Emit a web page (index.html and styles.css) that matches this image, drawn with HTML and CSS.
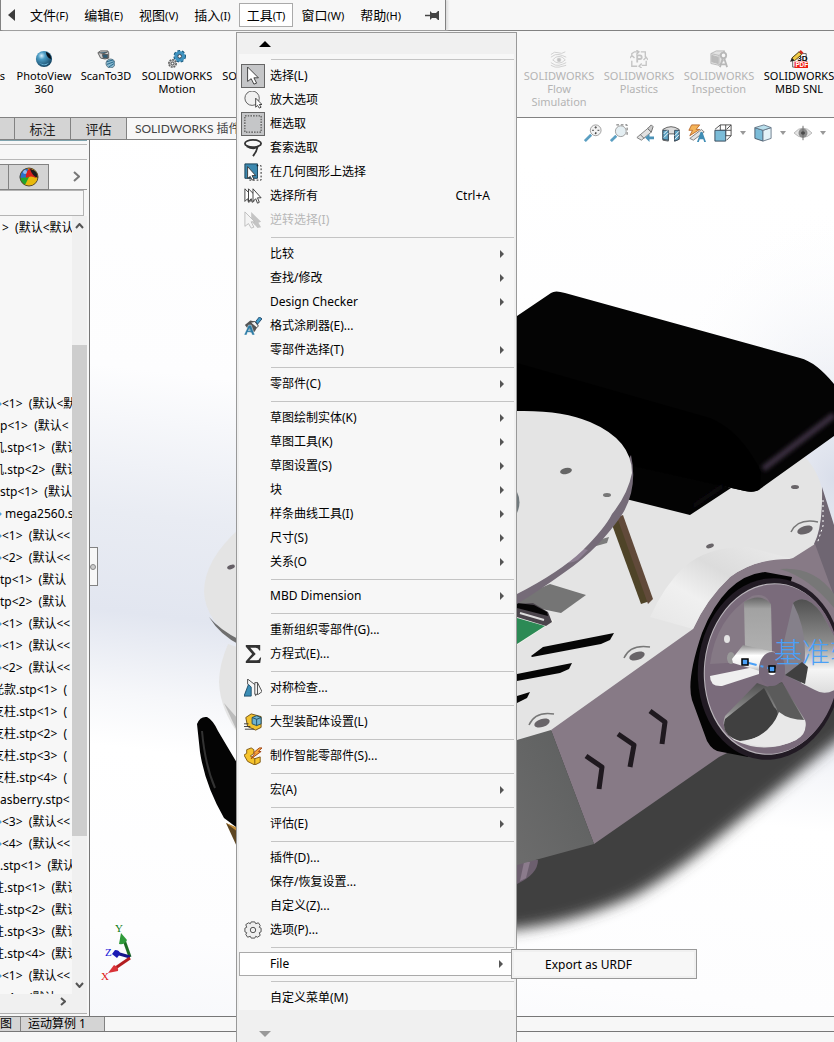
FILE: index.html
```
<!DOCTYPE html>
<html lang="zh-CN">
<head>
    <meta charset="UTF-8">
    <meta name="viewport" content="width=device-width, initial-scale=1.0">
    <title>SOLIDWORKS</title>
    <link rel="stylesheet" href="styles.css">
</head>
<body>
<div class="app">

    <header class="menubar">
        <nav class="menus">
            <svg class="collapse" width="7" height="12" viewBox="0 0 7 12"><path d="M7 0v12L0 6z" fill="#3c3c3c"/></svg>
            <button>文件<small>(F)</small></button>
            <button>编辑<small>(E)</small></button>
            <button>视图<small>(V)</small></button>
            <button>插入<small>(I)</small></button>
            <button class="open">工具<small>(T)</small></button>
            <button>窗口<small>(W)</small></button>
            <button>帮助<small>(H)</small></button>
            <svg class="pin" width="15" height="11" viewBox="0 0 15 11"><path d="M0 5.500h6" stroke="#444" stroke-width="1.500"/><path d="M5 1l2 2h4l2-2h1v9h-1l-2-2H7l-2 2z" fill="#444"/></svg>
        </nav>
    </header>

    <section class="ribbon">
        <div class="ribbon-group">
            <button class="tool edge">s</button>
            <button class="tool narrow">
                <svg viewBox="0 0 20 20"><defs><radialGradient id="ball" cx=".35" cy=".3" r=".75"><stop offset="0" stop-color="#d5eefa"/><stop offset=".3" stop-color="#4b9cc4"/><stop offset="1" stop-color="#12405e"/></radialGradient></defs><circle cx="10" cy="10" r="9" fill="url(#ball)"/><path d="M12 2q6 2 6 8-5-1-6-8z" fill="#081018"/><path d="M4 14q6 4 12 0-5 6-12 0z" fill="#6db7da"/></svg>
                <span>PhotoView 360</span>
            </button>
            <button class="tool narrow">
                <svg viewBox="0 0 20 20"><path d="M1 3l3-2h8l1 2v6l-4 1-5-1z" fill="#ccc" stroke="#555"/><path d="M2 3l6 1 4-2M6 5h6v4H7z" fill="#2c5d78" stroke="#555"/><circle cx="15" cy="15" r="5" fill="#8bb9cf" stroke="#59727f"/><path d="M11 13l7-2M11 16l8-3M13 19l6-4" stroke="#1d6186"/></svg>
                <span>ScanTo3D</span>
            </button>
            <button class="tool">
                <svg viewBox="0 0 20 20"><circle cx="13" cy="7" r="6" fill="none" stroke="#17577b" stroke-width="2" stroke-dasharray="3 2"/><circle cx="13" cy="7" r="4" fill="none" stroke="#3f92bf" stroke-width="4"/><circle cx="13" cy="7" r="2" fill="#fff" stroke="#234"/><circle cx="5" cy="15" r="4" fill="#bbb" stroke="#666" stroke-width="2" stroke-dasharray="2 1"/><circle cx="5" cy="15" r="3" fill="#bbb"/><circle cx="5" cy="15" r="1.500" fill="#fff" stroke="#444"/></svg>
                <span>SOLIDWORKS Motion</span>
            </button>
            <button class="tool clipped">SO</button>
        </div>
        <div class="ribbon-group right">
            <button class="tool" disabled>
                <svg viewBox="0 0 20 20" fill="none" stroke="#cdcdcd"><path d="M1 5q4-4 8-2t8-1M1 8q5-4 9-3t8 3M1 14q5 4 9 3t8-3M1 17q5 3 9 2t8-2M3 11q7-8 14 0-7 7-14 0"/><circle cx="10" cy="11" r="2" fill="#c3c3c3"/></svg>
                <span>SOLIDWORKS Flow Simulation</span>
            </button>
            <button class="tool" disabled>
                <svg viewBox="0 0 20 20" fill="none" stroke="#c4c4c4"><path d="M2 7V4l3-2h4M12 2h5v6M18 12v5h-5M8 18H2v-6M0 9l2-3 3 3M7 0l3 2-3 3M20 11l-2-3-3 3M13 15l-3 3 3 2" stroke-width="1.500"/><path d="M8 14V6h3q2 0 2 2t-2 2H8" stroke-width="2"/></svg>
                <span>SOLIDWORKS Plastics</span>
            </button>
            <button class="tool" disabled>
                <svg viewBox="0 0 20 20" fill="none" stroke="#b8b8b8"><path d="M1 4l6-3h9v10l-6 6-9-2z" fill="#e2e2e2"/><path d="M1 4l9 2 6-5M10 6v11"/><path d="M2 6l7 2v7l-7-2z" fill="#bbb"/><circle cx="15" cy="6" r="3" fill="#f7f7f7" stroke-width="2"/><path d="M14 10l-3 9M16 10l3 9M12 16h6" stroke-width="2"/></svg>
                <span>SOLIDWORKS Inspection</span>
            </button>
            <button class="tool">
                <svg viewBox="0 0 20 20"><path d="M3 8v11h15V4H9z" fill="#fff" stroke="#555"/><text x="8" y="12" class="ico-3d">3D</text><path d="M2 9l8-7 3 3-8 7z" fill="#f0c944" stroke="#443a14"/><path d="M10 2l2-2 3 3-2 2z" fill="#d42b1e"/><path d="M0 13l2-4 3 3z" fill="#222"/><path d="M5 13h15v7H5z" fill="#f01d12"/><text x="6" y="19" class="ico-pdf">PDF</text></svg>
                <span>SOLIDWORKS MBD SNL</span>
            </button>
        </div>
    </section>

    <main class="work">
        <div class="tabs">
            <button class="stub" aria-label="草图"></button>
            <button>标注</button>
            <button>评估</button>
            <button class="active">SOLIDWORKS 插件</button>
        </div>

        <aside class="panel">
            <div class="panel-grip"></div>
            <div class="panel-gap"></div>
            <div class="panel-tabs">
                <button class="stub" aria-label="配置"></button>
                <button aria-label="外观">
                    <svg width="20" height="20" viewBox="0 0 20 20"><circle cx="10" cy="10" r="9" fill="#e8b90c"/><path d="M10 10L1 12A9 9 0 0 1 8 1.200q4 3 2 8.800z" fill="#2b6fc8"/><path d="M10 10L1 11q1 5 5 7z" fill="#22a52c"/><path d="M7 11Q6 5 11 1q6 4 6 10-5-3-10 0z" fill="#d8211c"/><path d="M11 2q8 1 8 9-6-2-8-9z" fill="#1c1c1c"/><circle cx="6" cy="5" r="2" fill="#bfe0ff" opacity=".7"/><circle cx="10" cy="10" r="9" fill="none" stroke="#5b4a2a"/></svg>
                </button>
                <svg class="chev" width="7" height="11" viewBox="0 0 7 11"><path d="M1 1l5 4.500L1 10" fill="none" stroke="#777" stroke-width="2"/></svg>
            </div>
            <input class="filter" type="text" aria-label="筛选">
            <div class="tree-wrap">
                <ul class="tree">
                    <li class="root">&gt;&nbsp; (默认&lt;默认</li>
                    <li class="part">&lt;1&gt;&nbsp; (默认&lt;默认</li>
                    <li>p&lt;1&gt;&nbsp; (默认&lt;</li>
                    <li class="cut">机.stp&lt;1&gt;&nbsp; (默认</li>
                    <li class="cut">机.stp&lt;2&gt;&nbsp; (默认</li>
                    <li>stp&lt;1&gt;&nbsp; (默认</li>
                    <li class="part mega">mega2560.s</li>
                    <li class="part">&lt;1&gt;&nbsp; (默认&lt;&lt;</li>
                    <li class="part">&lt;2&gt;&nbsp; (默认&lt;&lt;</li>
                    <li>tp&lt;1&gt;&nbsp; (默认</li>
                    <li>tp&lt;2&gt;&nbsp; (默认</li>
                    <li class="part">&lt;1&gt;&nbsp; (默认&lt;&lt;</li>
                    <li class="part">&lt;1&gt;&nbsp; (默认&lt;&lt;</li>
                    <li class="part">&lt;2&gt;&nbsp; (默认&lt;&lt;</li>
                    <li class="cut">光款.stp&lt;1&gt;&nbsp; (</li>
                    <li class="cut">支柱.stp&lt;1&gt;&nbsp; (</li>
                    <li class="cut">支柱.stp&lt;2&gt;&nbsp; (</li>
                    <li class="cut">支柱.stp&lt;3&gt;&nbsp; (</li>
                    <li class="cut">支柱.stp&lt;4&gt;&nbsp; (</li>
                    <li>asberry.stp&lt;</li>
                    <li class="part">&lt;3&gt;&nbsp; (默认&lt;&lt;</li>
                    <li class="part">&lt;4&gt;&nbsp; (默认&lt;&lt;</li>
                    <li>.stp&lt;1&gt;&nbsp; (默认</li>
                    <li class="cut">柱.stp&lt;1&gt;&nbsp; (默认</li>
                    <li class="cut">柱.stp&lt;2&gt;&nbsp; (默认</li>
                    <li class="cut">柱.stp&lt;3&gt;&nbsp; (默认</li>
                    <li class="cut">柱.stp&lt;4&gt;&nbsp; (默认</li>
                    <li class="part">&lt;1&gt;&nbsp; (默认&lt;&lt;</li>
                    <li class="part">&lt;1&gt;&nbsp; (默认&lt;&lt;</li>
                </ul>
                <div class="vbar">
                    <svg width="9" height="6" viewBox="0 0 9 6"><path d="M1 5l3.500-4L8 5" fill="none" stroke="#555" stroke-width="2"/></svg>
                    <div class="thumb"></div>
                    <svg width="9" height="6" viewBox="0 0 9 6"><path d="M1 1l3.500 4L8 1" fill="none" stroke="#555" stroke-width="2"/></svg>
                </div>
            </div>
            <div class="hbar"><svg width="6" height="9" viewBox="0 0 6 9"><path d="M1 1l4 3.500L1 8" fill="none" stroke="#555" stroke-width="2"/></svg></div>
            <div class="panel-foot"></div>
        </aside>

        <div class="viewport">
            <svg class="model" viewBox="90 118 744 898" preserveAspectRatio="xMinYMin slice">
                <defs>
                    <filter id="soft" x="-20%" y="-20%" width="140%" height="140%"><feGaussianBlur stdDeviation="7"/></filter>
                    <filter id="sheen" x="-20%" y="-20%" width="140%" height="140%"><feGaussianBlur stdDeviation="2"/></filter>
                    <linearGradient id="sky" x1=".1" y1="0" x2="0" y2="1"><stop offset="0" stop-color="#fff"/><stop offset=".28" stop-color="#fdfdfe"/><stop offset=".44" stop-color="#e9ecf3"/><stop offset=".55" stop-color="#e2e6f0"/><stop offset=".64" stop-color="#f6f7fa"/><stop offset=".7" stop-color="#fff"/><stop offset=".9" stop-color="#fdfdfe"/><stop offset="1" stop-color="#f7f8fb"/></linearGradient>
                    <radialGradient id="haze" cx="1" cy=".65" r=".6"><stop offset="0" stop-color="#d9deea"/><stop offset="1" stop-color="#fff" stop-opacity="0"/></radialGradient>
                    <linearGradient id="arch" x1="0" y1="1" x2="1" y2="0"><stop offset="0" stop-color="#e6e6e6"/><stop offset=".35" stop-color="#f0f0f0"/><stop offset=".6" stop-color="#dcdcdc"/><stop offset="1" stop-color="#ebebeb"/></linearGradient>
                    <linearGradient id="front" x1="0" y1="1" x2="1" y2="0"><stop offset="0" stop-color="#6c6c6c"/><stop offset="1" stop-color="#5c5e5e"/></linearGradient>
                    <linearGradient id="shaft" x1="0" y1="0" x2="0" y2="1"><stop offset="0" stop-color="#8d8d8d"/><stop offset=".35" stop-color="#fff"/><stop offset=".7" stop-color="#eee"/><stop offset="1" stop-color="#8a8a8a"/></linearGradient>
                    <linearGradient id="bore" x1="0" y1="0" x2="0" y2="1"><stop offset="0" stop-color="#505050"/><stop offset=".45" stop-color="#8b8b8b"/><stop offset=".75" stop-color="#f5f5f5"/><stop offset="1" stop-color="#ddd"/></linearGradient>
                    <linearGradient id="strip" x1="0" y1="0" x2="0" y2="1"><stop offset="0" stop-color="#666"/><stop offset=".2" stop-color="#a2a2a2"/><stop offset="1" stop-color="#b1b1b1"/></linearGradient>
                    <clipPath id="below"><path d="M517 500H834V1016H517z"/></clipPath>
                </defs>
                <rect x="90" y="118" width="744" height="898" fill="url(#sky)"/>
                <rect x="517" y="180" width="317" height="460" fill="url(#haze)"/>

                <!-- left side of the robot -->
                <path d="M240 528Q204 560 204 592 205 620 240 646z" fill="#e4e4e4"/>
                <path d="M209 617Q220 635 240 645v-5Q220 630 209 617z" fill="#6f6f6f"/>
                <path d="M228 644Q219 665 219 682 220 710 240 736V648z" fill="#e4e4e4"/>
                <path d="M224 703l14 30v-14z" fill="#bbb"/>
                <ellipse cx="231" cy="567" rx="4" ry="2" fill="#655f66" transform="rotate(-20 231 567)"/>
                <path d="M226 823l12 6v20z" fill="#5d4521"/><path d="M226 823l12 5v4z" fill="#c18b36"/>
                <path d="M197 724Q200 716 207 717 213 720 218 731L240 768v62L224 818Q205 785 200 752z" fill="#040404"/>
                <path d="M202 731Q205 765 215 788" stroke="#333" stroke-width="2" fill="none"/>

                <!-- ground shadow -->
                <g clip-path="url(#below)"><path d="M480 932Q560 930 636 895 680 870 720 836L860 722V560H480z" fill="#404040" filter="url(#soft)"/></g>

                <!-- chassis -->
                <path d="M517 860h21q0 14-21 24z" fill="#6c5f6e"/><path d="M524 862h6l-4 16-6 3z" fill="#8b7b8c"/>
                <path d="M517 400L805 457Q821 474 824 500 826 525 816 545L793 562 720 640 551 731 517 741z" fill="#e4e4e4"/>
                <path d="M822 487l12 38v75l-20-56q9-17 8-57z" fill="#6f6672"/>
                <path d="M551 730L693 629Q706 600 730 577 755 558 793 558L815 544 834 596V700L719 757 594 844z" fill="#877a86"/>
                <path d="M517 740l34-10 43 114-77 21z" fill="url(#front)"/>
                <path d="M650 617Q664 586 684 567 708 546 748 547L793 559Q755 558 730 577 707 598 693 629z" fill="url(#arch)"/>
                <path d="M780 569q34-3 54 25v14q-24-30-54-39z" fill="#777"/>
                <path d="M823 500v26l-6 18" stroke="#fff" stroke-dasharray="2 3" fill="none"/>

                <g fill="#060606">
                    <path d="M531 656l12-9 71-14-4 7-9 4-69 13z"/>
                    <path d="M517 674l55-11-3 6-9 4-43 8z"/>
                    <path d="M517 696l13-4-3 6-10 5z"/>
                </g>
                <g fill="none" stroke="#1f191f" stroke-width="5" stroke-linejoin="round">
                    <path d="M650 711l15 11-3 22"/><path d="M618 734l16 11-4 22"/><path d="M586 756l16 11-3 22"/>
                </g>
                <g fill="#686468">
                    <ellipse cx="637" cy="656" rx="8" ry="4" transform="rotate(-18 637 656)"/>
                    <ellipse cx="542" cy="723" rx="8" ry="4" transform="rotate(-18 542 723)"/>
                    <ellipse cx="805" cy="530" rx="8" ry="4" transform="rotate(-18 805 530)"/>
                    <ellipse cx="710" cy="546" rx="4" ry="2" transform="rotate(-18 710 546)"/>
                    <ellipse cx="795" cy="487" rx="4" ry="2"/>
                </g>
                <g fill="none" stroke="#777" stroke-width="1.500">
                    <path d="M624 658q6-14 26-11M529 725q6-14 25-11M791 532q7-14 27-10"/>
                </g>

                <!-- electronics under the disc -->
                <path d="M517 598l33-14 36 11-25 18-44-9z" fill="#757575"/>
                <path d="M517 621l32-3 5 3-37 24z" fill="#f4f4ee"/>
                <path d="M517 618l28 8-28 18z" fill="#2c8a55"/>
                <path d="M517 604l16-1 15 9 4 10-6 4-29-9z" fill="#4b454c"/>
                <path d="M517 603l17 2 13 7 1 4-31-8z" fill="#060606"/>
                <path d="M520 613l24 7" stroke="#ddd" stroke-width="2"/>

                <!-- battery box -->
                <path d="M517 400H640V460l91 28-41 27-60-15-113-20z" fill="#030303"/>
                <path d="M517 316L551 293Q555 290 565 293L800 358Q816 362 834 384V436L760 489Q755 493 745 491L517 440z" fill="#040404"/>
                <path d="M517 363l193 55q30 12 51 53l-1 18q-5 4-15 2L517 440z" fill="#000"/>
                <path d="M763 469l71-54" stroke="#3a2f40" stroke-width="6" filter="url(#sheen)"/>
                <path d="M692 507l32-22" stroke="#1c171e" stroke-width="2" filter="url(#sheen)"/>

                <!-- standoff and top disc -->
                <path d="M595 541l14-4-2 6-18 5z" fill="#7c7c7c"/>
                <path d="M611 522l7-4 32 83-9 3z" fill="#4f4428"/>
                <path d="M617 517l6-2 30 84-5 5z" fill="#614a3a"/>
                <path d="M631 455Q638 487 623 513 600 548 565 572 540 590 517 604V590L600 510z" fill="#756b78"/>
                <path d="M588 550l-10 10q-8 4-12 2l14-14z" fill="#8d7f92"/>
                <path d="M517 411Q562 410 590 422 632 440 632 473 628 494 612 514 605 528 583 550 560 572 517 594z" fill="#e4e4e4"/>
                <ellipse cx="566" cy="471" rx="6" ry="3" fill="#666" transform="rotate(-12 566 471)"/>
                <ellipse cx="607" cy="495" rx="4" ry="2" fill="#777"/>
                <path d="M517 492q5 10 0 21z" fill="#717a7e"/>

                <!-- wheel -->
                <path d="M792 577L765 572Q725 576 702 633 686 680 692 700L707 741Q713 752 722 752L748 757z" fill="#040404"/>
                <ellipse cx="770" cy="669" rx="72" ry="91" fill="#221b24" transform="rotate(6 770 669)"/>
                <ellipse cx="771" cy="669" rx="67" ry="86" fill="#b9b4ba" transform="rotate(6 771 669)"/>
                <ellipse cx="772" cy="669" rx="67" ry="85" fill="#7a6b7b" transform="rotate(6 772 669)"/>
                <path d="M710 664Q716 618 752 596 768 592 771 606L772 656 744 662z" fill="#857985"/>
                <path d="M744 602q16-10 27 2l1 50-27-6z" fill="url(#strip)"/>
                <path d="M793 603Q806 592 822 614L836 640V689Q825 696 815 690L785 675 782 650z" fill="#85808a"/>
                <path d="M793 603Q806 592 822 614L836 640V689Q825 696 815 690L801 683Q812 640 793 603z" fill="url(#bore)"/>
                <path d="M785 675l17-13 6 5-3 17z" fill="#404040"/>
                <path d="M757 683L725 716Q720 730 734 740 765 755 796 740 808 730 805 720L782 682 768 687z" fill="url(#bore)"/>
                <path d="M764 688l-39 31q-5 16 15 22 26-3 36-18 5-10-2-16z" fill="#404040"/>
                <path d="M766 687l16-4 22 37q-8 12-26 0 0-10-3-15z" fill="#5b5b5b"/>
                <path d="M779 712q10 8 26 8 3 14-9 20-24 12-54 2 28-6 37-30z" fill="#e8e8e8"/>
                <path d="M710 676l49-10v8l-37 12q-12 1-12-10z" fill="#efefef"/>
                <ellipse cx="727" cy="639" rx="3" ry="4" fill="#e4e4e4"/>
                <ellipse cx="731" cy="658" rx="4" ry="6" fill="#999"/>
                <path d="M732 659l11-14 32 7-2 23-40-12z" fill="url(#shaft)"/>
                <ellipse cx="772" cy="669" rx="13" ry="17" fill="#77697a"/>
                <ellipse cx="772" cy="671" rx="4" ry="4" fill="#fff"/>

                <path d="M745 662l27 7" stroke="#4aa0f7" stroke-width="2" stroke-dasharray="12 4 3 4"/>
                <path d="M742 659h6v6h-6zM769 666h6v6h-6z" fill="#4aa0f7" stroke="#000" stroke-width="1.500"/>
                <text class="axis-name" x="774" y="663">基准轴</text>

                <!-- orientation triad -->
                <path d="M130 957l-6-17" stroke="#1c6b22" stroke-width="3"/><path d="M121 933l6 7q-2 5-8 4z" fill="#2f9a3a"/>
                <path d="M130 957l-14-4" stroke="#16168a" stroke-width="3"/><path d="M112 954l3-4q5 0 5 4l-3 4z" fill="#1a1ab4"/>
                <path d="M130 958l-16 11" stroke="#b31d20" stroke-width="3"/><path d="M108 973l6-8q5 2 4 6z" fill="#d93338"/>
                <g class="triad"><text x="115" y="932" fill="#0a7a14">Y</text><text x="105" y="956" fill="#1414d8">Z</text><text x="101" y="980" fill="#e01414">X</text></g>
            </svg>

            <button class="splitter" aria-label="折叠面板"><i></i></button>

            <div class="hud">
                <button aria-label="整屏显示全图"><svg viewBox="0 0 20 20"><path d="M1 19l7-7" stroke="#5b9fc2" stroke-width="3"/><circle cx="13" cy="7" r="6" fill="#f2f2f2" stroke="#999"/><path d="M13 3v2M13 9v2M9 7h2M15 7h2M12 4l1-1 1 1M12 10l1 1 1-1" stroke="#333" fill="none"/></svg></button>
                <button aria-label="局部放大"><svg viewBox="0 0 20 20"><path d="M7 1h12v13" stroke="#555" stroke-dasharray="3 2" fill="none"/><path d="M1 19l6-6" stroke="#5b9fc2" stroke-width="3"/><circle cx="12" cy="8" r="6" fill="#e4eef2" stroke="#999"/></svg></button>
                <button aria-label="上一视图"><svg viewBox="0 0 20 20"><path d="M1 15l12-10 4 4-11 9z" fill="#e2e2e2" stroke="#777"/><path d="M13 5l4-4 2 2-2 6zM5 12l4 4" fill="#ccc" stroke="#666"/><path d="M10 15l5-4v3h5v3h-5v3z" fill="#4d93b8"/></svg></button>
                <button aria-label="剖面视图"><svg viewBox="0 0 20 20"><path d="M1 6q9-6 18 0v11l-5 2v-8H7v8l-6-1z" fill="#ddd" stroke="#555"/><path d="M1 7h6v11l-6-1zM14 7h5v10l-5 2z" fill="#5fa5c6" stroke="#345"/><path d="M2 11l4-4M2 15l5-5M14 13l5-5M14 17l5-5" stroke="#fff"/></svg></button>
                <button aria-label="动态注解"><svg viewBox="0 0 20 20"><path d="M4 1h9L9 6h4L2 13l3-6H1z" fill="#f5b458" stroke="#b8692b"/><path d="M2 16L15 6l3 3L6 18z" fill="#e2e2e2" stroke="#777"/><path d="M10 20l4-11h2l4 11h-2l-1-3h-4l-1 3z" fill="#3f8db5"/></svg></button>
                <button aria-label="视图定向"><svg viewBox="0 0 20 20"><path d="M7 1h12v12H7zM1 6l6-5M14 6l5-5M14 18l5-5M13 1v12M7 7h12" fill="#fff" stroke="#444"/><path d="M1 7h12v12H1z" fill="#7bbcd8" stroke="#345"/></svg></button>
                <i class="caret"></i>
                <button aria-label="显示样式"><svg viewBox="0 0 20 20"><path d="M1 4l9 3v12l-9-3z" fill="#7bbcd8" stroke="#456"/><path d="M10 7l9-3v12l-9 3z" fill="#e4f2f7" stroke="#678"/><path d="M1 4l10-3 8 3-9 3z" fill="#b9dfec" stroke="#678"/></svg></button>
                <i class="caret"></i>
                <button aria-label="隐藏所有类型"><svg viewBox="0 0 20 20"><path d="M0 10q10-11 20 0-10 10-20 0z" fill="#e4e4e4" stroke="#b5b5b5"/><circle cx="10" cy="10" r="5" fill="#8c8c8c"/><circle cx="10" cy="10" r="2" fill="#333"/><path d="M10 2v16" stroke="#666"/></svg></button>
                <i class="caret"></i>
            </div>
        </div>
    </main>

    <footer class="status">
        <div class="sheets">
            <button>图</button>
            <button class="study">运动算例 1</button>
        </div>
    </footer>

    <div class="menu" role="menu">
        <button class="scroll" aria-label="向上滚动"><i class="up"></i></button>
        <hr>
        <button class="item"><span class="ico pressed"><svg viewBox="0 0 20 20"><path d="M4 0v16l4-3 3 6 3-1-3-6h5z" fill="#fff" stroke="#333"/></svg></span>选择(L)</button>
        <button class="item"><span class="ico"><svg viewBox="0 0 20 20"><circle cx="9" cy="8" r="8" fill="#f0f0f0" stroke="#555"/><path d="M13 8v10l2-2 2 3 2-1-2-3h3z" fill="#fff" stroke="#333"/></svg></span>放大选项</button>
        <button class="item"><span class="ico pressed"><svg viewBox="0 0 20 20"><path d="M1 1h18v18H1z" fill="none" stroke="#fff"/><path d="M1 1h18v18H1z" fill="none" stroke="#111" stroke-dasharray="2 1"/></svg></span>框选取</button>
        <button class="item"><span class="ico"><svg viewBox="0 0 20 20"><ellipse cx="10" cy="5" rx="9" ry="4" fill="none" stroke="#333" stroke-width="2"/><path d="M3 8q7 4 12 1-1 5-5 10" fill="none" stroke="#333" stroke-width="2"/></svg></span>套索选取</button>
        <button class="item"><span class="ico"><svg viewBox="0 0 20 20"><path d="M1 1h14v16H1z" fill="#3b88af" stroke="#143b50"/><path d="M14 3h5v16H6v-3" fill="none" stroke="#111" stroke-dasharray="2 2"/><path d="M4 4v13l3-2 2 4 2-1-2-4h4z" fill="#fff" stroke="#333"/></svg></span>在几何图形上选择</button>
        <button class="item"><span class="ico"><svg viewBox="0 0 20 20" fill="#fff" stroke="#333"><path d="M1 2v14l3-3 1 4 2-1V8z"/><path d="M5 2v14l3-3 1 4 2-1V8z"/><path d="M10 2v14l3-3 2 5 2-1-2-5h4z"/></svg></span>选择所有<span class="key">Ctrl+A</span></button>
        <button class="item" disabled><span class="ico"><svg viewBox="0 0 20 20"><path d="M8 1l11 11-3 1 3 5-4 1-7-8z" fill="#c4c4c4"/><path d="M1 1v16l4-3 3 5 3-1-3-6h4z" fill="#f4f4f4" stroke="#bbb"/></svg></span>逆转选择(I)</button>
        <hr>
        <button class="item sub">比较</button>
        <button class="item sub">查找/修改</button>
        <button class="item sub">Design Checker</button>
        <button class="item"><span class="ico"><svg viewBox="0 0 20 20"><path d="M1 9l6-5 5 1 4 4-4 7-4 2z" fill="#555"/><path d="M7 6l7 6 2-2-4-5z" fill="#f4f4f4" stroke="#444"/><path d="M13 5l4-5 3 2-5 6z" fill="#3f9cc8" stroke="#246"/><path d="M0 20L5 9h3l4 11H9l-1-3H4l-1 3zM6 13l-1 2h2z" fill="#2b7ba5" stroke="#fff" stroke-width=".5"/></svg></span>格式涂刷器(E)...</button>
        <button class="item sub">零部件选择(T)</button>
        <hr>
        <button class="item sub">零部件(C)</button>
        <hr>
        <button class="item sub">草图绘制实体(K)</button>
        <button class="item sub">草图工具(K)</button>
        <button class="item sub">草图设置(S)</button>
        <button class="item sub">块</button>
        <button class="item sub">样条曲线工具(I)</button>
        <button class="item sub">尺寸(S)</button>
        <button class="item sub">关系(O</button>
        <hr>
        <button class="item sub">MBD Dimension</button>
        <hr>
        <button class="item">重新组织零部件(G)...</button>
        <button class="item"><span class="ico"><svg viewBox="0 0 20 20"><path d="M2 0h16v6h-1q-1-3-4-3H7l6 7-7 7h8q3 0 4-3h1l-1 6H2v-2l7-8-7-8z" fill="#333"/></svg></span>方程式(E)...</button>
        <hr>
        <button class="item"><span class="ico"><svg viewBox="0 0 20 20"><path d="M0 19L5 6l3 3v10z" fill="#3c8db5" stroke="#174a66"/><path d="M4 6V0l9 7v12" fill="none" stroke="#444"/><path d="M12 4v13h4l4-3-5-10z" fill="#f3f3f3" stroke="#444"/><path d="M15 4v13" stroke="#444"/></svg></span>对称检查...</button>
        <hr>
        <button class="item"><span class="ico"><svg viewBox="0 0 20 20"><path d="M2 5l6-4 11 3v12l-6 3-9-4z" fill="#f2c22e" stroke="#6b4c0d"/><path d="M9 5l5-2 5 2v7l-5 2-5-2z" fill="#6fb2cf" stroke="#1e4c63"/><path d="M9 5l5 2 5-2M14 7v7" fill="none" stroke="#1e4c63"/><path d="M0 12h5M0 15h7M1 18h10" stroke="#333"/></svg></span>大型装配体设置(L)</button>
        <hr>
        <button class="item"><span class="ico"><svg viewBox="0 0 20 20"><path d="M0 9l3-2V3l5-2 3 2v4l-4 3 5 3 6-2v6l-6 3-8-4z" fill="#f5c32c" stroke="#7a520b"/><path d="M12 13v7" stroke="#7a520b"/><path d="M11 6l6-5h3l-4 4h3l-11 8 4-6z" fill="#f6a338" stroke="#9a3d12"/></svg></span>制作智能零部件(S)...</button>
        <hr>
        <button class="item sub">宏(A)</button>
        <hr>
        <button class="item sub">评估(E)</button>
        <hr>
        <button class="item">插件(D)...</button>
        <button class="item">保存/恢复设置...</button>
        <button class="item">自定义(Z)...</button>
        <button class="item"><span class="ico"><svg viewBox="0 0 20 20" fill="#eee" stroke="#444"><path d="M8 1h4l1 2 3-1 2 3-1 2 2 1v4l-2 1 1 3-3 2-2-1-1 2H8l-1-2-3 1-2-3 1-2-2-1V8l2-1-1-3 3-2 2 1z"/><circle cx="10" cy="10" r="3"/></svg></span>选项(P)...</button>
        <hr>
        <div class="sub-wrap">
            <button class="item sub hover">File</button>
            <div class="submenu" role="menu"><button>Export as URDF</button></div>
        </div>
        <hr>
        <button class="item">自定义菜单(M)</button>
        <button class="scroll bottom" aria-label="向下滚动"><i class="down"></i></button>
    </div>
</div>
</body>
</html>
```
FILE: styles.css
```
* {
    box-sizing: border-box;
}
body {
    margin: 0;
    font-family: "Noto Sans", "Noto Sans CJK SC", sans-serif;
    font-size: 12px;
    color: #000;
    background: #f7f7f7;
}
button {
    margin: 0;
    padding: 0;
    border: none;
    background: none;
    font: inherit;
    color: inherit;
}
svg {
    display: block;
    flex: none;
}
.app {
    position: relative;
    display: flex;
    flex-direction: column;
    height: 100vh;
    min-height: 1042px;
    overflow: hidden;
}

/* menu bar */
.menubar {
    height: 31px;
    border-bottom: 1px solid #828282;
}
.menus {
    display: flex;
    align-items: center;
    width: 446px;
    height: 30px;
    border-left: 1px solid #828282;
    border-right: 1px solid #828282;
    box-shadow: 2px 0 2px #ddd;
}
.menus .collapse {
    margin: 0 7px;
}
.menus button {
    height: 24px;
    padding: 0 7px;
    border: 1px solid transparent;
    font-size: 13px;
    line-height: 20px;
    white-space: nowrap;
}
.menus small {
    font-size: 11px;
}
.menus .open {
    background: #fff;
    border-color: #aaa;
}
.menus .pin {
    margin-left: 16px;
}

/* ribbon */
.ribbon {
    display: flex;
    height: 87px;
    border-bottom: 1px solid #828282;
}
.ribbon-group {
    display: flex;
    align-items: flex-start;
    padding-top: 19px;
}
.ribbon-group.right {
    margin-left: auto;
    margin-right: -5px;
}
.tool {
    display: flex;
    flex: none;
    flex-direction: column;
    align-items: center;
    gap: 1px;
    width: 80px;
    font-size: 11px;
    line-height: 13px;
}
.tool svg {
    width: 18px;
    height: 18px;
}
.tool.narrow {
    width: 62px;
}
.tool.edge {
    width: 13px;
    padding: 19px 8px 0 0;
}
.tool.clipped {
    width: 20px;
    padding: 19px 0 0 5px;
}
.tool:disabled {
    color: #b4b4b4;
}
.ico-3d {
    font: bold 9px "Liberation Sans", sans-serif;
}
.ico-pdf {
    font: bold 7px "Liberation Sans", sans-serif;
    fill: #fff;
}

/* work area */
.work {
    display: grid;
    grid-template-columns: 90px 1fr;
    grid-template-rows: 22px 1fr;
    flex: 1;
    min-height: 0;
}
.tabs {
    grid-area: 1 / 1 / 2 / 3;
    justify-self: start;
    z-index: 1;
    display: flex;
    width: 420px;
    background: #f7f7f7;
    border-bottom: 1px solid #828282;
}
.tabs button {
    width: 56px;
    background: #d4d4d4;
    border-right: 1px solid #828282;
    color: #222;
    font-size: 13px;
    line-height: 20px;
}
.tabs .stub {
    width: 15px;
}
.tabs .active {
    width: auto;
    padding-left: 8px;
    background: none;
    border: none;
    color: #444;
    font-family: Lato, "Noto Sans CJK SC", sans-serif;
    font-size: 12px;
}

/* feature tree panel */
.panel {
    grid-area: 2 / 1;
    display: flex;
    flex-direction: column;
    min-height: 0;
    padding-right: 2px;
    background: #f7f7f7;
    border-right: 1px solid #777;
}
.panel-grip {
    height: 5px;
    border-top: 1px solid #7fa3ad;
    border-bottom: 1px solid #b8b8b8;
}
.panel-gap {
    height: 15px;
    border-bottom: 1px solid #b8b8b8;
}
.panel-tabs {
    display: flex;
    align-items: center;
    height: 30px;
    padding-top: 4px;
    border-bottom: 1px solid #999;
}
.panel-tabs button {
    display: flex;
    align-items: center;
    justify-content: center;
    width: 40px;
    height: 26px;
    background: #d4d4d4;
    border: 1px solid #828282;
    border-left: none;
}
.panel-tabs .stub {
    width: 9px;
}
.panel-tabs .chev {
    margin-left: 24px;
}
.filter {
    width: 84px;
    height: 26px;
    background: #f7f7f7;
    border: 1px solid #b4b4b4;
    border-left: none;
}
.tree-wrap {
    display: flex;
    flex: 1;
    min-height: 0;
}
.tree {
    flex: 1;
    min-width: 0;
    margin: 0;
    padding: 1px 0 0;
    overflow: hidden;
    list-style: none;
}
.tree li {
    height: 22px;
    line-height: 22px;
    white-space: nowrap;
}
.tree .root {
    margin-bottom: 154px;
    padding-left: 2px;
}
.tree .cut {
    text-indent: -8px;
}
.tree .part {
    padding-left: 2px;
    background: radial-gradient(circle at 0 11px, #4aa3e0 1px, transparent 2px);
}
.tree .mega {
    padding-left: 5px;
}
.vbar {
    display: flex;
    flex-direction: column;
    align-items: center;
    width: 15px;
    padding: 7px 0 6px;
    background: #f0f0f0;
}
.vbar .thumb {
    width: 15px;
    height: 491px;
    margin: 116px 0 auto;
    background: #cdcdcd;
}
.hbar {
    display: flex;
    align-items: center;
    justify-content: flex-end;
    height: 19px;
    padding: 0 21px 4px 0;
    background: #f0f0f0;
}
.panel-foot {
    height: 3px;
    border-top: 1px solid #b0b0b0;
}

/* graphics area */
.viewport {
    grid-area: 1 / 2 / 3 / 3;
    position: relative;
    overflow: hidden;
    background: #fff;
}
.model {
    width: 100%;
    height: 100%;
}
.axis-name {
    font-size: 28px;
    font-weight: 300;
    fill: #4aa0f7;
}
.triad {
    font: 11px "Liberation Serif", serif;
}
.splitter {
    position: absolute;
    top: 429px;
    left: 0;
    display: flex;
    align-items: center;
    width: 8px;
    height: 39px;
    background: #f7f7f7;
    border: 1px solid #828282;
    border-left: none;
}
.splitter i {
    width: 6px;
    height: 6px;
    background: #ccc;
    border: 1px solid #888;
    border-radius: 50%;
}
.hud {
    position: absolute;
    top: 6px;
    right: 8px;
    display: flex;
    align-items: center;
    gap: 8px;
}
.hud svg {
    width: 18px;
    height: 18px;
}
.hud .caret {
    border: 3px solid transparent;
    border-top: 4px solid #999;
    border-bottom: none;
}

/* status bar */
.status {
    height: 26px;
    border-top: 1px solid #777;
}
.sheets {
    display: flex;
    height: 15px;
    border-bottom: 1px solid #777;
}
.sheets button {
    width: 21px;
    background: #d4d4d4;
    border-right: 1px solid #828282;
    line-height: 12px;
    text-align: left;
}
.sheets .study {
    width: 84px;
    padding-left: 7px;
}

/* tools menu */
.menu {
    position: absolute;
    top: 32px;
    bottom: 0;
    left: 236px;
    z-index: 2;
    display: flex;
    flex-direction: column;
    width: 281px;
    padding: 0 2px;
    background: #f0f0f0;
    border: 1px solid #999;
    border-bottom: none;
}
.menu hr {
    flex: none;
    width: 100%;
    height: 10px;
    margin: 0;
    border: solid #f7f7f7;
    border-width: 5px 0 4px 32px;
    background: #c4c4c4;
}
.item {
    display: flex;
    flex: none;
    align-items: center;
    width: 100%;
    height: 24px;
    padding-left: 31px;
    background: #f7f7f7;
    line-height: 22px;
    white-space: nowrap;
}
.item:disabled {
    color: #b8b8b8;
}
.item .ico {
    display: flex;
    align-items: center;
    justify-content: center;
    width: 24px;
    height: 24px;
    margin: 0 5px 0 -29px;
}
.item .ico svg {
    width: 18px;
    height: 18px;
}
.item .pressed {
    background: #c5c6c8;
    border: 1px solid #666;
}
.item .key {
    margin-left: auto;
    padding-right: 24px;
}
.item.sub::after {
    content: "";
    margin-left: auto;
    margin-right: 10px;
    border: 4px solid transparent;
    border-left: 4px solid #555;
    border-right: none;
}
.item.hover {
    padding-left: 30px;
    background: #fff;
    border: 1px solid #aaa;
}
.scroll {
    flex: none;
    height: 21px;
    padding-left: 20px;
    background: #f0f0f0;
}
.scroll.bottom {
    flex: 1;
    padding-top: 16px;
}
.scroll i {
    display: block;
    width: 0;
    border: 6px solid transparent;
}
.scroll .up {
    border-top: none;
    border-bottom-color: #000;
}
.scroll .down {
    border-bottom: none;
    border-top-color: #999;
}
.sub-wrap {
    position: relative;
}
.submenu {
    position: absolute;
    top: -3px;
    left: 272px;
    width: 186px;
    padding: 2px;
    background: #f0f0f0;
    border: 1px solid #999;
}
.submenu button {
    width: 100%;
    height: 24px;
    padding-left: 31px;
    background: #f7f7f7;
    text-align: left;
}
```
